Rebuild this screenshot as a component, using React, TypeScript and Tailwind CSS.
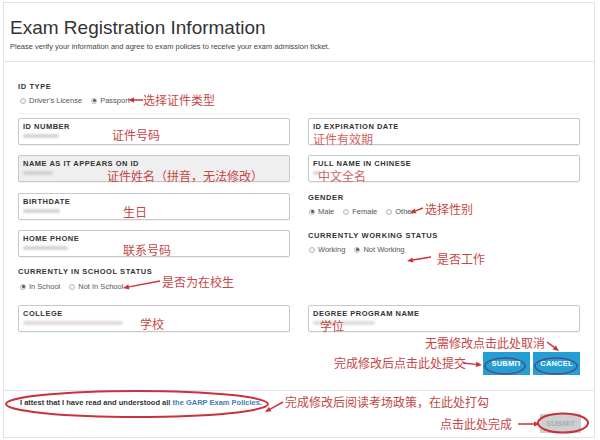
import React from "react";

const LBL = "text-[7.5px] leading-[9px] font-bold tracking-[0.5px] text-[#333]";
const CJK = "absolute text-[12px] leading-[12px] text-[#c74646] whitespace-nowrap font-[family-name:'Noto_Sans_CJK_SC',sans-serif]";

function Radio({ label, checked }: { label: string; checked?: boolean }) {
  return (
    <span className="flex items-center gap-[3px]">
      <span className="w-[6px] h-[6px] rounded-full border border-[#b8b8b8] bg-[#f3f3f3] flex items-center justify-center">
        {checked && <span className="w-[3px] h-[3px] rounded-full bg-[#555]" />}
      </span>
      <span className="text-[7.5px] leading-[9px] text-[#555]">{label}</span>
    </span>
  );
}

function Field({ label, barClass, disabled }: { label: string; barClass: string; disabled?: boolean }) {
  return (
    <div
      className={
        "h-[27px] border border-[#c8c8c8] rounded-[2px] px-[4px] pt-[3px] shadow-[0_1px_1px_rgba(0,0,0,0.06)] " +
        (disabled ? "bg-[#efefef]" : "bg-white")
      }
    >
      <div className={LBL}>{label}</div>
      <div className={"mt-[3px] h-[4px] rounded blur-[1px] " + barClass} />
    </div>
  );
}

function Arrow({ x1, y1, x2, y2 }: { x1: number; y1: number; x2: number; y2: number }) {
  const dx = x2 - x1;
  const dy = y2 - y1;
  const len = Math.hypot(dx, dy);
  const ux = dx / len;
  const uy = dy / len;
  const hl = 6;
  const hw = 2.6;
  const bx = x2 - ux * hl;
  const by = y2 - uy * hl;
  const px = -uy;
  const py = ux;
  const pts = `${x2},${y2} ${bx + px * hw},${by + py * hw} ${bx - px * hw},${by - py * hw}`;
  return (
    <g>
      <line x1={x1} y1={y1} x2={bx} y2={by} stroke="#cc3338" strokeWidth={1.5} />
      <polygon points={pts} fill="#cc3338" />
    </g>
  );
}

export default function App() {
  return (
    <div className="relative w-[600px] h-[440px] bg-white overflow-hidden pt-[2px] pl-[3px] font-[family-name:'Liberation_Sans',Arial,sans-serif]">
      <div className="w-[592px] h-[436px] border border-[#e2e2e2] flex flex-col">
        {/* Header */}
        <div className="h-[58px] pl-[6px] pt-[15px]">
          <div className="text-[19px] leading-[19px] text-[#333]">Exam Registration Information</div>
          <div className="mt-[6px] text-[7.5px] leading-[7.5px] text-[#444]">
            Please verify your information and agree to exam policies to receive your exam admission ticket.
          </div>
        </div>

        {/* Form */}
        <div className="h-[329px] border-t border-[#e2e2e2] px-[14px]">
          <div className="grid grid-cols-2 gap-x-[18px]">
            <div className="h-[52px] border-b border-[#f0f0f0] pt-[20px]">
              <div className={LBL + " tracking-[0.6px]"}>ID TYPE</div>
              <div className="mt-[5px] flex gap-[9px] pl-[2px]">
                <Radio label="Driver's License" />
                <Radio label="Passport" checked />
              </div>
            </div>
            <div className="h-[52px] border-b border-[#f0f0f0]" />
          </div>

          <div className="mt-[4px] grid grid-cols-2 gap-x-[18px]">
            <Field label="ID NUMBER" barClass="w-[36px] bg-[#d4d4d4]" />
            <Field label="ID EXPIRATION DATE" barClass="w-[0px]" />
          </div>

          <div className="mt-[10px] grid grid-cols-2 gap-x-[18px]">
            <Field label="NAME AS IT APPEARS ON ID" barClass="w-[30px] bg-[#d0d0d0]" disabled />
            <Field label="FULL NAME IN CHINESE" barClass="w-[8px] bg-[#d8d8d8]" />
          </div>

          <div className="mt-[11px] grid grid-cols-2 gap-x-[18px]">
            <Field label="BIRTHDATE" barClass="w-[37px] bg-[#d4d4d4]" />
            <div className="h-[27px]">
              <div className={LBL + " tracking-[0.6px]"}>GENDER</div>
              <div className="mt-[5px] flex gap-[9px] pl-[1px]">
                <Radio label="Male" checked />
                <Radio label="Female" />
                <Radio label="Other" />
              </div>
            </div>
          </div>

          <div className="mt-[10px] grid grid-cols-2 gap-x-[18px]">
            <Field label="HOME PHONE" barClass="w-[45px] bg-[#d4d4d4]" />
            <div className="h-[27px] pt-[1px]">
              <div className={LBL + " tracking-[0.6px]"}>CURRENTLY WORKING STATUS</div>
              <div className="mt-[5px] flex gap-[9px] pl-[1px]">
                <Radio label="Working" />
                <Radio label="Not Working" checked />
              </div>
            </div>
          </div>

          <div className="mt-[10px]">
            <div className={LBL + " tracking-[0.55px]"}>CURRENTLY IN SCHOOL STATUS</div>
            <div className="mt-[6px] flex gap-[9px] pl-[2px]">
              <Radio label="In School" checked />
              <Radio label="Not In School" />
            </div>
          </div>

          <div className="mt-[14px] grid grid-cols-2 gap-x-[18px]">
            <Field label="COLLEGE" barClass="w-[100px] bg-[#e2d9e2]" />
            <Field label="DEGREE PROGRAM NAME" barClass="w-[62px] bg-[#dedede]" />
          </div>

          <div className="mt-[20px] flex justify-end gap-[3px]">
            <button className="w-[47px] h-[23px] bg-[#239fd6] text-white text-[7.5px] font-bold tracking-[0.2px] flex items-center justify-center">
              SUBMIT
            </button>
            <button className="w-[47px] h-[23px] bg-[#239fd6] text-white text-[7.5px] font-bold tracking-[0.2px] flex items-center justify-center">
              CANCEL
            </button>
          </div>
        </div>

        {/* Footer */}
        <div className="flex-1 border-t border-[#e2e2e2] pl-[16px] pr-[13px] pt-[7px] flex flex-col">
          <div className="text-[7.5px] leading-[9px] font-bold text-[#333]">
            I attest that I have read and understood all{" "}
            <span className="text-[#3f7db5]">the GARP Exam Policies.</span>
          </div>
          <button className="mt-[7px] self-end w-[41px] h-[19px] bg-[#cfcfcf] text-[#a8b0ba] text-[7.5px] font-bold flex items-center justify-center">
            SUBMIT
          </button>
        </div>
      </div>

      {/* Annotations */}
      <span className={CJK + " left-[143px] top-[94px]"}>选择证件类型</span>
      <span className={CJK + " left-[112px] top-[129px]"}>证件号码</span>
      <span className={CJK + " left-[313px] top-[133px] text-[#d06262]"}>证件有效期</span>
      <span className={CJK + " left-[107px] top-[170px] text-[11.5px]"}>证件姓名（拼音，无法修改）</span>
      <span className={CJK + " left-[318px] top-[170px] text-[#d06262]"}>中文全名</span>
      <span className={CJK + " left-[123px] top-[206px]"}>生日</span>
      <span className={CJK + " left-[123px] top-[244px]"}>联系号码</span>
      <span className={CJK + " left-[162px] top-[276px]"}>是否为在校生</span>
      <span className={CJK + " left-[425px] top-[203px]"}>选择性别</span>
      <span className={CJK + " left-[437px] top-[253px]"}>是否工作</span>
      <span className={CJK + " left-[140px] top-[318px]"}>学校</span>
      <span className={CJK + " left-[320px] top-[320px]"}>学位</span>
      <span className={CJK + " left-[425px] top-[337px]"}>无需修改点击此处取消</span>
      <span className={CJK + " left-[334px] top-[357px]"}>完成修改后点击此处提交</span>
      <span className={CJK + " left-[285px] top-[396px]"}>完成修改后阅读考场政策，在此处打勾</span>
      <span className={CJK + " left-[440px] top-[418px]"}>点击此处完成</span>

      <svg className="absolute left-0 top-0 pointer-events-none" width="600" height="440" viewBox="0 0 600 440">
        <Arrow x1={143} y1={100} x2={128} y2={100} />
        <Arrow x1={160} y1={281} x2={123} y2={288} />
        <Arrow x1={423} y1={208} x2={410} y2={213} />
        <Arrow x1={431} y1={257} x2={407} y2={261} />
        <Arrow x1={547} y1={342} x2={559} y2={351} />
        <Arrow x1={463} y1={363} x2={482} y2={365} />
        <Arrow x1={283} y1={402} x2={265} y2={412} />
        <Arrow x1={518} y1={424} x2={540} y2={424} />
        <ellipse cx={137} cy={404} rx={131} ry={13} fill="none" stroke="#c8323a" strokeWidth={2} />
        <ellipse cx={563} cy={423} rx={25} ry={9.5} fill="none" stroke="#c8323a" strokeWidth={2} />
        <ellipse cx={505} cy={366} rx={20} ry={8} fill="none" stroke="#5a3a6e" strokeWidth={1.5} opacity={0.8} />
        <ellipse cx={556} cy={366} rx={21} ry={8} fill="none" stroke="#5a3a6e" strokeWidth={1.5} opacity={0.8} />
      </svg>
    </div>
  );
}
